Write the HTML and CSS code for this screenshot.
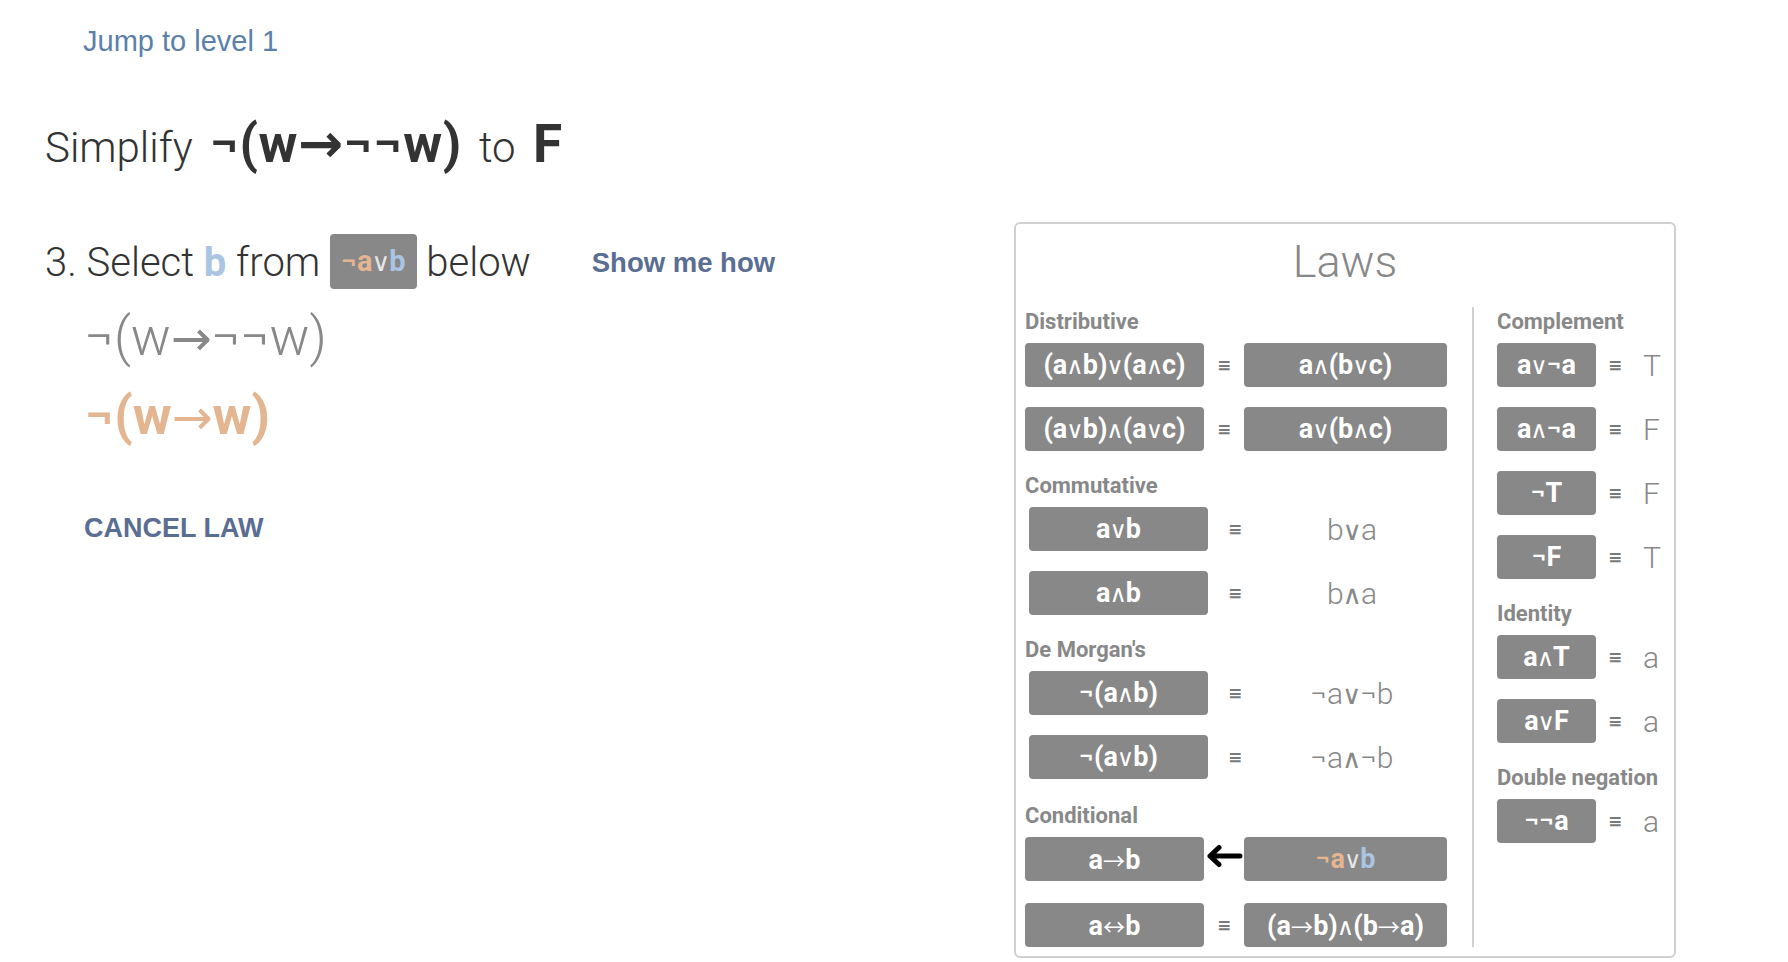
FILE: index.html
```html
<!DOCTYPE html>
<html lang="en">
<head>
<meta charset="utf-8">
<title>Simplify</title>
<link rel="stylesheet" href="styles.css">
</head>
<body>
<div class="page">
  <main class="lesson">
    <a class="jump" href="#">Jump to level 1</a>
    <h1 class="goal">Simplify <b>¬(w<span class="arw">→</span>¬¬w)</b> to <b>F</b></h1>
    <div class="step">
      <span class="step-text">3. Select <b class="hl-b">b</b> from <span class="chip"><span class="hl-a">¬a</span><span class="op chip-op">∨</span><span class="hl-b">b</span></span> below</span>
      <a class="show" href="#">Show me how</a>
    </div>
    <div class="expr expr-prev">¬(w<span class="arw">→</span>¬¬w)</div>
    <div class="expr expr-cur">¬(w<span class="arw">→</span>w)</div>
    <a class="cancel" href="#">CANCEL LAW</a>
  </main>

  <aside class="laws">
    <h2 class="laws-title">Laws</h2>
    <div class="cols">
      <div class="col-left">
        <div class="glabel first">Distributive</div>
        <div class="row pair">
          <div class="btn l">(a<span class="op">∧</span>b)<span class="op">∨</span>(a<span class="op">∧</span>c)</div>
          <div class="eq">≡</div>
          <div class="btn r">a<span class="op">∧</span>(b<span class="op">∨</span>c)</div>
        </div>
        <div class="row pair">
          <div class="btn l">(a<span class="op">∨</span>b)<span class="op">∧</span>(a<span class="op">∨</span>c)</div>
          <div class="eq">≡</div>
          <div class="btn r">a<span class="op">∨</span>(b<span class="op">∧</span>c)</div>
        </div>

        <div class="glabel">Commutative</div>
        <div class="row simple">
          <div class="btn l">a<span class="op">∨</span>b</div>
          <div class="eq">≡</div>
          <div class="val">b<span class="op">∨</span>a</div>
        </div>
        <div class="row simple">
          <div class="btn l">a<span class="op">∧</span>b</div>
          <div class="eq">≡</div>
          <div class="val">b<span class="op">∧</span>a</div>
        </div>

        <div class="glabel">De Morgan's</div>
        <div class="row simple">
          <div class="btn l">¬(a<span class="op">∧</span>b)</div>
          <div class="eq">≡</div>
          <div class="val">¬a<span class="op">∨</span>¬b</div>
        </div>
        <div class="row simple">
          <div class="btn l">¬(a<span class="op">∨</span>b)</div>
          <div class="eq">≡</div>
          <div class="val">¬a<span class="op">∧</span>¬b</div>
        </div>

        <div class="glabel cond">Conditional</div>
        <div class="row pair cond-row">
          <div class="btn l">a<span class="op arr">→</span>b</div>
          <div class="eq arrow"><svg width="38" height="22" viewBox="0 0 38 22"><path d="M35 11H5M14 2.5L5 11l9 8.5" stroke="#000" stroke-width="5" fill="none" stroke-linecap="round" stroke-linejoin="round"/></svg></div>
          <div class="btn r"><span class="hl-a">¬a</span><span class="op chip-op">∨</span><span class="hl-b">b</span></div>
        </div>
        <div class="row pair">
          <div class="btn l">a<span class="op arr">↔</span>b</div>
          <div class="eq">≡</div>
          <div class="btn r">(a<span class="op arr">→</span>b)<span class="op">∧</span>(b<span class="op arr">→</span>a)</div>
        </div>
      </div>

      <div class="col-right">
        <div class="glabel first">Complement</div>
        <div class="row side">
          <div class="btn s">a<span class="op">∨</span>¬a</div>
          <div class="eq">≡</div>
          <div class="val">T</div>
        </div>
        <div class="row side">
          <div class="btn s">a<span class="op">∧</span>¬a</div>
          <div class="eq">≡</div>
          <div class="val">F</div>
        </div>
        <div class="row side">
          <div class="btn s">¬T</div>
          <div class="eq">≡</div>
          <div class="val">F</div>
        </div>
        <div class="row side">
          <div class="btn s">¬F</div>
          <div class="eq">≡</div>
          <div class="val">T</div>
        </div>

        <div class="glabel">Identity</div>
        <div class="row side">
          <div class="btn s">a<span class="op">∧</span>T</div>
          <div class="eq">≡</div>
          <div class="val">a</div>
        </div>
        <div class="row side">
          <div class="btn s">a<span class="op">∨</span>F</div>
          <div class="eq">≡</div>
          <div class="val">a</div>
        </div>

        <div class="glabel">Double negation</div>
        <div class="row side">
          <div class="btn s">¬¬a</div>
          <div class="eq">≡</div>
          <div class="val">a</div>
        </div>
      </div>
    </div>
  </aside>
</div>
</body>
</html>
```

FILE: styles.css
```css
html, body {
  margin: 0;
  padding: 0;
  background: #fff;
}

body {
  font-family: Roboto, "Liberation Sans", "DejaVu Sans", sans-serif;
  color: #333;
}

.page {
  display: flex;
  align-items: flex-start;
  height: 962px;
  overflow: hidden;
}

/* ---------- left: lesson ---------- */
.lesson {
  flex: none;
  width: 1014px;
  padding-left: 45px;
  box-sizing: border-box;
}

.jump {
  display: block;
  width: max-content;
  margin: 21px 0 0 38px;
  font-family: "Liberation Sans", Arial, sans-serif;
  font-size: 29px;
  line-height: 40px;
  color: #5b80aa;
  text-decoration: none;
}

.goal {
  margin: 53px 0 0;
  font-size: 42px;
  line-height: 60px;
  font-weight: 300;
  color: #333;
  white-space: nowrap;
}

.goal b {
  font-weight: 700;
  font-size: 53px;
  margin: 0 7px;
  letter-spacing: 0.5px;
}

.arw {
  font-family: "DejaVu Sans", sans-serif;
  font-weight: 400;
}

.goal .arw {
  font-weight: 700;
  font-size: 1.02em;
}

.step {
  margin-top: 55px;
  display: flex;
  align-items: flex-start;
}

.step-text {
  font-size: 40px;
  line-height: 60px;
  font-weight: 300;
  color: #333;
  white-space: nowrap;
}

.hl-b {
  color: #aac4e2;
  font-weight: 700;
}

.hl-a {
  color: #e3b691;
  font-weight: 700;
}

.chip {
  display: inline-block;
  height: 55px;
  line-height: 55px;
  padding: 0 11px;
  background: #888;
  border-radius: 4px;
  font-size: 29px;
  font-weight: 700;
  vertical-align: 5px;
}

.op {
  font-family: "DejaVu Sans", sans-serif;
  font-weight: 400;
  font-size: 0.88em;
  margin: 0 -1px;
}

.op.arr {
  font-family: "Noto Sans CJK JP", "DejaVu Sans", sans-serif;
  font-size: 0.82em;
  margin: 0;
}

.chip-op {
  color: #e6e6e6;
}

.show {
  margin-left: 61px;
  font-family: "Liberation Sans", Arial, sans-serif;
  font-weight: 700;
  font-size: 27.5px;
  line-height: 60px;
  color: #5a6d92;
  text-decoration: none;
  white-space: nowrap;
}

.expr {
  margin-left: 40px;
  font-size: 53px;
  line-height: 70px;
  white-space: nowrap;
}

.expr-prev {
  margin-top: 9px;
  font-weight: 300;
  color: #888;
}

.expr-cur {
  margin-top: 8px;
  font-weight: 700;
  color: #e3b691;
}

.expr .arw {
  font-size: 0.92em;
}

.cancel {
  display: block;
  width: max-content;
  margin: 56px 0 0 39px;
  font-family: "Liberation Sans", Arial, sans-serif;
  font-weight: 700;
  font-size: 27px;
  line-height: 40px;
  color: #5a6d92;
  text-decoration: none;
}

/* ---------- right: laws panel ---------- */
.laws {
  flex: none;
  margin-top: 222px;
  width: 662px;
  height: 736px;
  box-sizing: border-box;
  border: 2px solid #d0d0d0;
  border-radius: 6px;
  padding: 8px 0 9px;
  display: flex;
  flex-direction: column;
}

.laws-title {
  margin: 0 0 15px;
  font-size: 45px;
  line-height: 60px;
  font-weight: 300;
  color: #888;
  text-align: center;
}

.cols {
  flex: 1;
  display: flex;
}

.col-left {
  width: 458px;
  box-sizing: border-box;
  padding-left: 9px;
  border-right: 2px solid #d0d0d0;
}

.col-right {
  flex: 1;
  padding-left: 23px;
}

.glabel {
  margin: 23px 0 9px;
  font-size: 22px;
  line-height: 24px;
  font-weight: 700;
  color: #888;
  white-space: nowrap;
}

.glabel.first {
  margin-top: 3px;
}

.glabel.cond {
  margin-top: 25px;
}

.row {
  display: flex;
  align-items: center;
  height: 44px;
}

.row + .row {
  margin-top: 20px;
}

.cond-row + .row {
  margin-top: 22px;
}

.btn {
  flex: none;
  height: 44px;
  line-height: 44px;
  background: #888;
  border-radius: 4px;
  color: #fff;
  text-align: center;
  font-size: 27px;
  font-weight: 700;
  white-space: nowrap;
}

.btn.l { width: 179px; }
.btn.r { width: 203px; }
.btn.s { width: 99px; }

.row.simple {
  padding-left: 4px;
}

.eq {
  flex: none;
  font-family: "DejaVu Sans", sans-serif;
  font-size: 17px;
  font-weight: 700;
  color: #7a7a7a;
  text-align: center;
}

.pair .eq { width: 40px; }
.simple .eq { width: 54px; }
.side .eq { width: 38px; }

.eq.arrow {
  display: flex;
  justify-content: center;
  margin-bottom: 6px;
}

.val {
  font-size: 30px;
  font-weight: 300;
  color: #888;
  white-space: nowrap;
}

.simple .val {
  width: 180px;
  text-align: center;
}

.side .val {
  padding-left: 9px;
}
```
